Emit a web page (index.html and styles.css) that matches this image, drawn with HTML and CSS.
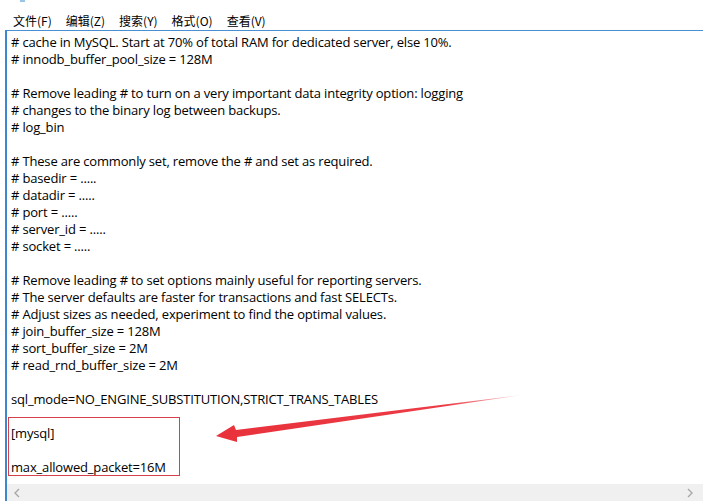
FILE: index.html
```html
<!DOCTYPE html>
<html lang="zh-CN">
<head>
  <meta charset="UTF-8">
  <meta name="viewport" content="width=device-width, initial-scale=1.0">
  <title>my.ini - 记事本</title>
  <link rel="stylesheet" href="styles.css">
</head>
<body>
  <div class="window">
    <div class="titlebar"><span class="app-icon"></span></div>

    <div class="menubar">
      <span class="menu-item">文件(F)</span>
      <span class="menu-item">编辑(Z)</span>
      <span class="menu-item">搜索(Y)</span>
      <span class="menu-item">格式(O)</span>
      <span class="menu-item">查看(V)</span>
    </div>

    <div class="editor">
<pre class="content"># cache in MySQL. Start at 70% of total RAM for dedicated server, else 10%.
# innodb_buffer_pool_size = 128M

# Remove leading # to turn on a very important data integrity option: logging
# changes to the binary log between backups.
# log_bin

# These are commonly set, remove the # and set as required.
# basedir = .....
# datadir = .....
# port = .....
# server_id = .....
# socket = .....

# Remove leading # to set options mainly useful for reporting servers.
# The server defaults are faster for transactions and fast SELECTs.
# Adjust sizes as needed, experiment to find the optimal values.
# join_buffer_size = 128M
# sort_buffer_size = 2M
# read_rnd_buffer_size = 2M

sql_mode=NO_ENGINE_SUBSTITUTION,STRICT_TRANS_TABLES

[mysql]

max_allowed_packet=16M</pre>
      <div class="hscroll">
        <svg class="scroll-arrow" width="8" height="10" viewBox="0 0 8 10"><path d="M6 1 L2 5 L6 9" fill="none" stroke="#a8a8a8" stroke-width="1.4"/></svg>
        <svg class="scroll-arrow" width="8" height="10" viewBox="0 0 8 10"><path d="M2 1 L6 5 L2 9" fill="none" stroke="#a8a8a8" stroke-width="1.4"/></svg>
      </div>
    </div>

    <!-- 标注 -->
    <div class="mark-box"></div>
    <svg class="arrow" width="703" height="501" viewBox="0 0 703 501">
      <defs>
        <linearGradient id="fade" x1="216" y1="436" x2="522" y2="395" gradientUnits="userSpaceOnUse">
          <stop offset="0" stop-color="#e8313b"/>
          <stop offset="0.75" stop-color="#ec3c46"/>
          <stop offset="1" stop-color="#f6c4c7"/>
        </linearGradient>
      </defs>
      <polygon points="216,436 234,425 236,430 522,395 237,437 237,442" fill="url(#fade)"/>
    </svg>
  </div>
</body>
</html>
```

FILE: styles.css
```css
body {
  margin: 0;
  background-color: white;
  overflow: hidden;
}
.window {
  position: relative;
  width: 703px;
  height: 501px;
  background-color: white;
}
.titlebar {
  height: 9px;
}
.app-icon {
  display: block;
  width: 5px;
  height: 2px;
  margin-left: 20px;
  background-color: #9cc3e8;
}
.menubar {
  height: 21px;
  line-height: 23px;
  padding-left: 6px;
  font-family: "Noto Sans CJK SC", "Noto Sans", sans-serif;
  font-size: 12px;
  color: #000;
  display: flex;
}
.menu-item {
  padding: 0 7px;
}
.editor {
  margin-left: 5px;
  border-left: 2px solid #3d86d0;
  border-top: 1px solid #4a8fd4;
}
.content {
  margin: 0;
  height: 450px;
  padding: 3px 0 0 4px;
  overflow: hidden;
  font-family: "Open Sans", "Noto Sans", sans-serif;
  font-size: 13px;
  letter-spacing: -0.17px;
  line-height: 17px;
  color: #000;
  white-space: pre;
}
.hscroll {
  height: 17px;
  background-color: #f0f0f0;
  display: flex;
  justify-content: space-between;
  align-items: center;
  padding: 0 9px 0 6px;
}
.mark-box {
  position: absolute;
  left: 8px;
  top: 417px;
  width: 170px;
  height: 57px;
  border: 1px solid #d5404b;
}
.arrow {
  position: absolute;
  left: 0;
  top: 0;
  pointer-events: none;
}
```
